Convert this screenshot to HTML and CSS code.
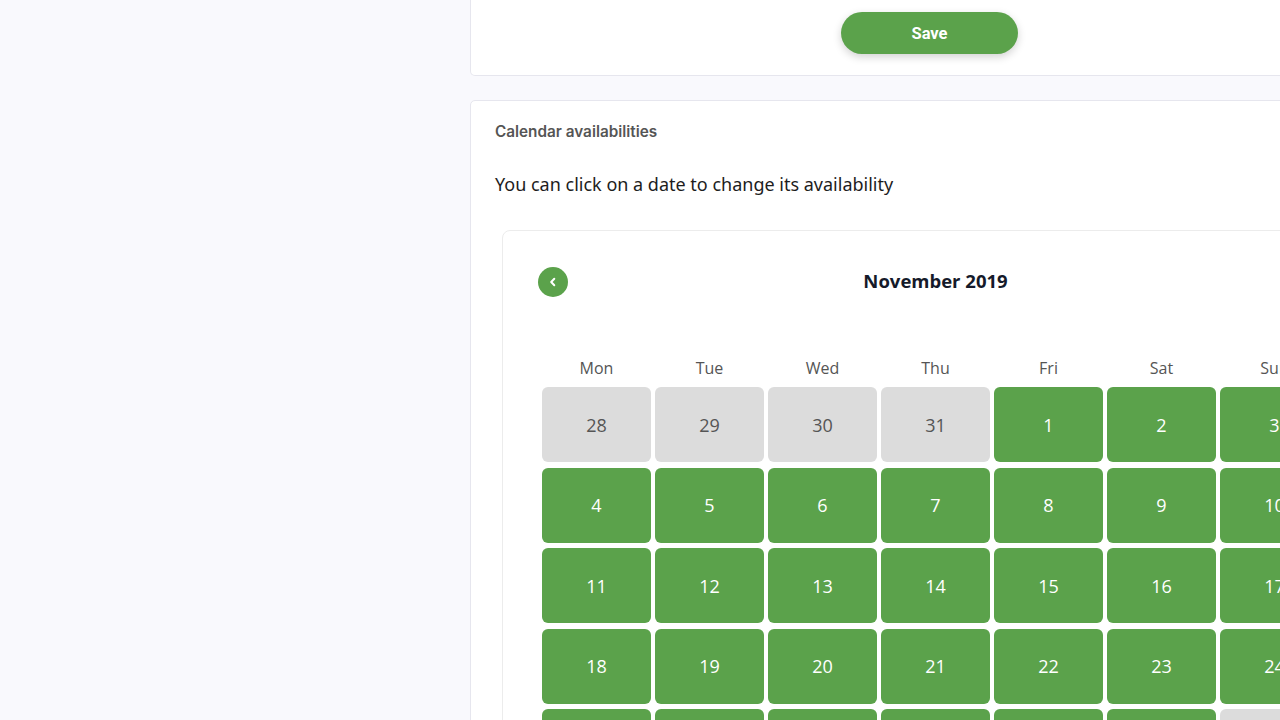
FILE: index.html
```html
<!DOCTYPE html>
<html lang="en">
<head>
    <meta charset="UTF-8">
    <meta name="viewport" content="width=device-width, initial-scale=1.0">
    <title>Calendar availabilities</title>
    <link rel="stylesheet" href="styles.css">
</head>
<body>

<div class="layout">
    <aside class="sidebar"></aside>

    <main class="content">
        <div class="card card-top">
            <button class="btn-save">Save</button>
        </div>

        <div class="card card-calendar">
            <h2 class="card-title">Calendar availabilities</h2>
            <p class="card-text">You can click on a date to change its availability</p>

            <div class="calendar">
                <div class="calendar-header">
                    <button class="nav-btn" aria-label="Previous month">
                        <svg width="10" height="10" viewBox="0 0 10 10">
                            <path d="M6.3 1.8 L3.2 5 L6.3 8.2" fill="none" stroke="#fff" stroke-width="2" stroke-linecap="round" stroke-linejoin="round"/>
                        </svg>
                    </button>
                    <div class="month">November 2019</div>
                </div>

                <div class="weekdays">
                    <span>Mon</span><span>Tue</span><span>Wed</span><span>Thu</span><span>Fri</span><span>Sat</span><span>Sun</span>
                </div>

                <div class="days">
                    <!-- previous month -->
                    <div class="day off">28</div>
                    <div class="day off">29</div>
                    <div class="day off">30</div>
                    <div class="day off">31</div>
                    <div class="day">1</div>
                    <div class="day">2</div>
                    <div class="day">3</div>
                    <div class="day">4</div>
                    <div class="day">5</div>
                    <div class="day">6</div>
                    <div class="day">7</div>
                    <div class="day">8</div>
                    <div class="day">9</div>
                    <div class="day">10</div>
                    <div class="day">11</div>
                    <div class="day">12</div>
                    <div class="day">13</div>
                    <div class="day">14</div>
                    <div class="day">15</div>
                    <div class="day">16</div>
                    <div class="day">17</div>
                    <div class="day">18</div>
                    <div class="day">19</div>
                    <div class="day">20</div>
                    <div class="day">21</div>
                    <div class="day">22</div>
                    <div class="day">23</div>
                    <div class="day">24</div>
                    <div class="day">25</div>
                    <div class="day">26</div>
                    <div class="day">27</div>
                    <div class="day">28</div>
                    <div class="day">29</div>
                    <div class="day">30</div>
                    <!-- next month -->
                    <div class="day off">1</div>
                </div>
            </div>
        </div>
    </main>
</div>

</body>
</html>
```

FILE: styles.css
```css
html, body {
    margin: 0;
    padding: 0;
    overflow: hidden;
}

body {
    background-color: #f9f9fd;
    font-family: "Open Sans", Arial, sans-serif;
    width: 1280px;
    height: 720px;
}

.layout {
    display: flex;
    width: 1400px;
}

.sidebar {
    width: 470px;
    flex-shrink: 0;
}

.content {
    width: 919px;
    flex-shrink: 0;
    display: flex;
    flex-direction: column;
    gap: 24px;
}

.card {
    background-color: #fff;
    border: 1px solid #e6e6ee;
    border-radius: 5px;
}

.card-top {
    border-top: none;
    border-radius: 0 0 5px 5px;
    padding: 12px 0 21px;
    display: flex;
    justify-content: center;
}

.btn-save {
    background-color: #5ba24b;
    color: #fff;
    border: none;
    border-radius: 21px;
    width: 177px;
    height: 42px;
    padding: 1px 0 0;
    font-family: Roboto, Arial, sans-serif;
    font-weight: bold;
    font-size: 16.5px;
    cursor: pointer;
    box-shadow: 0 3px 8px rgba(0, 0, 0, 0.18);
}

.card-calendar {
    padding: 21px 24px 40px;
}

.card-title {
    margin: 0;
    font-family: Inter, Arial, sans-serif;
    font-size: 15.3px;
    font-weight: 600;
    color: #555;
    line-height: 20px;
}

.card-text {
    margin: 30px 0 0;
    font-family: "Noto Sans", Arial, sans-serif;
    font-size: 18px;
    color: #1d1d1d;
    line-height: 24px;
}

.calendar {
    margin: 34px 0 0 7px;
    border: 1px solid #ececec;
    border-radius: 8px;
    padding: 36px 40px 40px 39px;
    width: 787px;
}

.calendar-header {
    position: relative;
    display: flex;
    align-items: center;
    justify-content: center;
    height: 30px;
}

.nav-btn {
    position: absolute;
    left: -4px;
    top: 0;
    width: 30px;
    height: 30px;
    border-radius: 50%;
    border: none;
    padding: 0;
    background-color: #5ba24b;
    display: flex;
    align-items: center;
    justify-content: center;
    cursor: pointer;
}

.month {
    font-size: 18.5px;
    font-weight: bold;
    color: #151a2a;
    padding-bottom: 3px;
}

.weekdays {
    display: grid;
    grid-template-columns: repeat(7, 109px);
    column-gap: 4px;
    margin-top: 60px;
    font-size: 16px;
    line-height: 22px;
    color: #555;
    text-align: center;
}

.days {
    display: grid;
    grid-template-columns: repeat(7, 109px);
    grid-auto-rows: 75px;
    column-gap: 4px;
    row-gap: 5.5px;
    margin-top: 8px;
}

.day {
    background-color: #5ba24b;
    color: #fff;
    border-radius: 6px;
    font-size: 18px;
    display: flex;
    align-items: center;
    justify-content: center;
    cursor: pointer;
}

.day.off {
    background-color: #dcdcdc;
    color: #555;
}
```
